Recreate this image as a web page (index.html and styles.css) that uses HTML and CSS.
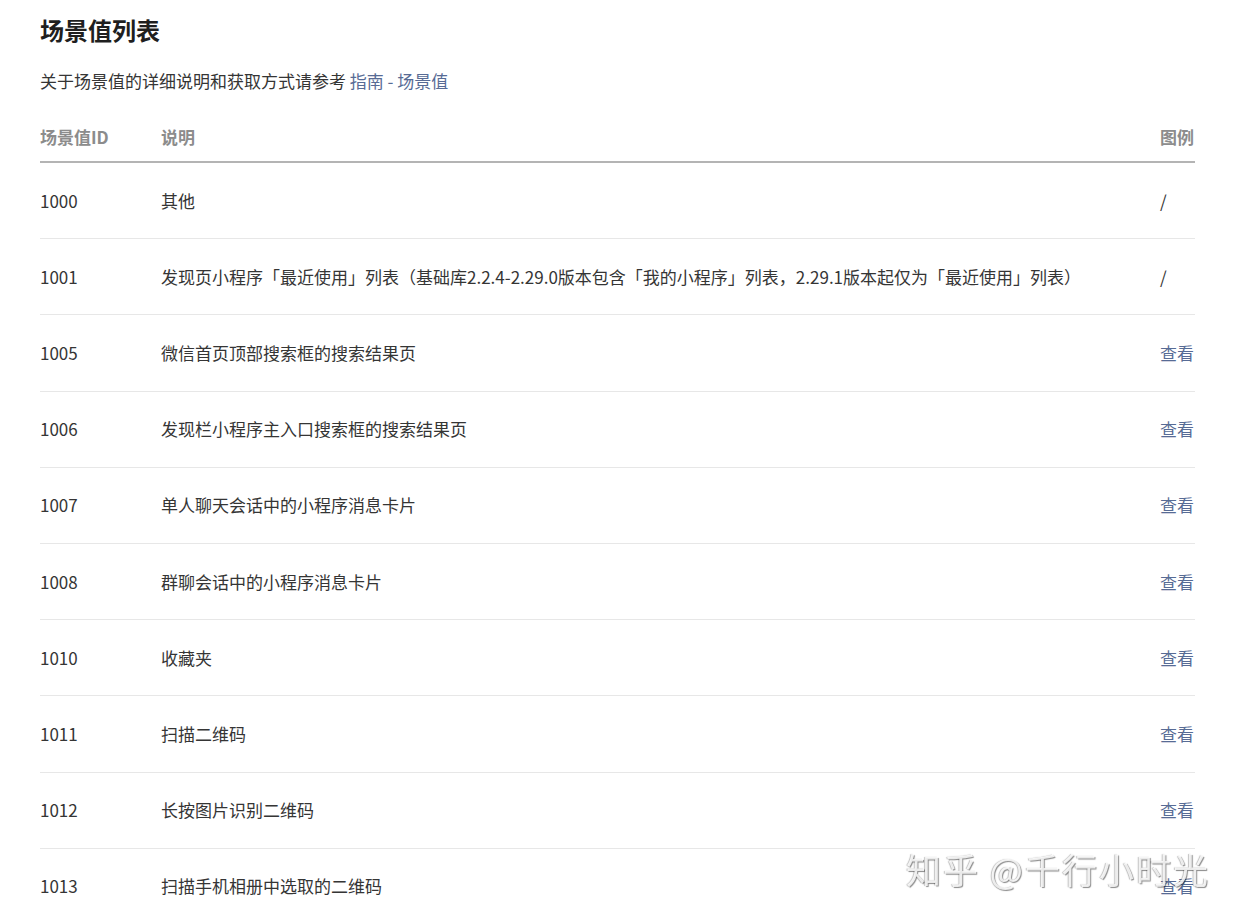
FILE: index.html
```html
<!DOCTYPE html>
<html lang="zh-CN">
<head>
  <meta charset="UTF-8">
  <meta name="viewport" content="width=device-width, initial-scale=1.0">
  <title>场景值列表</title>
  <link rel="stylesheet" href="styles.css">
</head>
<body>
  <div class="container">
    <h1>场景值列表</h1>
    <p class="intro">关于场景值的详细说明和获取方式请参考 <a href="#">指南 - 场景值</a></p>

    <table class="scene-table">
      <colgroup>
        <col class="col-id">
        <col class="col-desc">
        <col class="col-pic">
      </colgroup>
      <thead>
        <tr>
          <th>场景值ID</th>
          <th>说明</th>
          <th>图例</th>
        </tr>
      </thead>
      <tbody>
        <tr><td>1000</td><td>其他</td><td>/</td></tr>
        <tr><td>1001</td><td>发现页小程序「最近使用」列表（基础库2.2.4-2.29.0版本包含「我的小程序」列表，2.29.1版本起仅为「最近使用」列表）</td><td>/</td></tr>
        <tr><td>1005</td><td>微信首页顶部搜索框的搜索结果页</td><td><a href="#">查看</a></td></tr>
        <tr><td>1006</td><td>发现栏小程序主入口搜索框的搜索结果页</td><td><a href="#">查看</a></td></tr>
        <tr><td>1007</td><td>单人聊天会话中的小程序消息卡片</td><td><a href="#">查看</a></td></tr>
        <tr><td>1008</td><td>群聊会话中的小程序消息卡片</td><td><a href="#">查看</a></td></tr>
        <tr><td>1010</td><td>收藏夹</td><td><a href="#">查看</a></td></tr>
        <tr><td>1011</td><td>扫描二维码</td><td><a href="#">查看</a></td></tr>
        <tr><td>1012</td><td>长按图片识别二维码</td><td><a href="#">查看</a></td></tr>
        <tr class="last"><td>1013</td><td>扫描手机相册中选取的二维码</td><td><a href="#">查看</a></td></tr>
      </tbody>
    </table>
  </div>

  <div class="watermark">知乎 @千行小时光</div>
</body>
</html>
```

FILE: styles.css
```css
body {
  font-family: "Noto Sans CJK SC", "Noto Sans", sans-serif;
  background-color: #ffffff;
  color: #353535;
  margin: 0;
  padding: 0;
}

.container {
  padding: 14px 45px 0 40px;
}

h1 {
  font-size: 24px;
  line-height: 32px;
  font-weight: bold;
  color: #1f1f1f;
  margin: 0;
}

.intro {
  font-size: 17px;
  line-height: 26px;
  margin: 22px 0 0;
}

a {
  color: #576b95;
  text-decoration: none;
}

.scene-table {
  width: 100%;
  margin-top: 18px;
  border-collapse: collapse;
  table-layout: fixed;
  font-size: 17px;
}

.col-id {
  width: 121px;
}

.col-pic {
  width: 35px;
}

.scene-table th {
  text-align: left;
  font-weight: bold;
  color: #8c8c8c;
  line-height: 26px;
  padding: 12px 0 11px;
  border-bottom: 2px solid #b4b4b4;
}

.scene-table td {
  height: 75.2px;
  padding: 0;
  line-height: 26px;
  vertical-align: middle;
  border-bottom: 1px solid #e7e7e7;
  white-space: nowrap;
}

/* bottom row is cut by the window edge */
.scene-table .last td {
  height: 46px;
  padding-top: 24px;
  vertical-align: top;
  border-bottom: none;
}

.watermark {
  position: fixed;
  top: 846px;
  left: 906px;
  font-size: 35px;
  line-height: 46px;
  letter-spacing: 2px;
  color: rgba(255, 255, 255, 0.85);
  text-shadow: 1px 1px 1px rgba(0, 0, 0, 0.45), -1px 0 1px rgba(0, 0, 0, 0.25);
  white-space: nowrap;
}
```
